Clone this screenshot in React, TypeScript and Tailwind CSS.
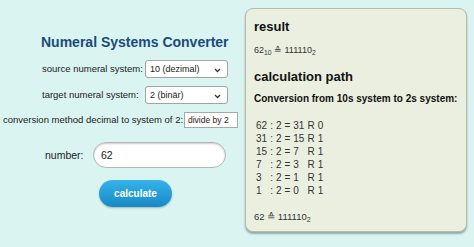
import { FC } from 'react';

const rows = [
  ['62', '2', '31', '0'],
  ['31', '2', '15', '1'],
  ['15', '2', '7', '1'],
  ['7', '2', '3', '1'],
  ['3', '2', '1', '1'],
  ['1', '2', '0', '1'],
];

const Chevron: FC = () => (
  <svg width="7" height="5" viewBox="0 0 7 5" className="absolute right-[6px] top-[7px]">
    <path d="M1 1l2.5 2.5L6 1" fill="none" stroke="#333" strokeWidth="1.3" />
  </svg>
);

const FakeSelect: FC<{ value: string }> = ({ value }) => (
  <div className="relative ml-[3px] h-[18px] w-[83px] shrink-0 rounded-[3px] border border-[#a3a3a3] bg-white pl-[4px] text-[9px] leading-[16px] text-[#222]">
    {value}
    <Chevron />
  </div>
);

const App: FC = () => {
  return (
    <div className="flex h-[247px] w-[474px] overflow-hidden bg-[#d9f4f1] font-['Liberation_Sans',Arial,sans-serif] text-[#222]">
      {/* left form */}
      <div className="flex w-[245px] shrink-0 flex-col pt-[34px]">
        <h1 className="pl-[41px] text-[14px] font-bold leading-[16px] text-[#1c4b7b]">
          Numeral Systems Converter
        </h1>

        <div className="mt-[10px] flex items-center pl-[42px]">
          <span className="w-[100px] shrink-0 whitespace-nowrap text-[9.5px] leading-[18px]">source numeral system:</span>
          <FakeSelect value="10 (dezimal)" />
        </div>

        <div className="mt-[8px] flex items-center pl-[42px]">
          <span className="w-[100px] shrink-0 whitespace-nowrap text-[9.5px] leading-[18px]">target numeral system:</span>
          <FakeSelect value="2 (binär)" />
        </div>

        <div className="mt-[8px] flex items-center pl-[3px]">
          <span className="w-[181px] shrink-0 whitespace-nowrap text-[9.5px] leading-[16px]">
            conversion method decimal to system of 2:
          </span>
          <div className="h-[16px] w-[54px] shrink-0 border border-[#a8a8a8] bg-white pl-[3px] text-[8.5px] leading-[14px]">
            divide by 2
          </div>
        </div>

        <div className="mt-[14px] flex items-center pl-[45px]">
          <span className="w-[48px] text-[10.5px] leading-[26px]">number:</span>
          <div className="h-[26px] w-[133px] rounded-[13px] border border-[#b5b5b5] bg-white pl-[7px] text-[10.5px] leading-[24px] shadow-[inset_0_1px_2px_rgba(0,0,0,0.2)]">
            62
          </div>
        </div>

        <div className="mt-[12px] pl-[99px]">
          <button className="h-[27px] w-[73px] rounded-full bg-gradient-to-b from-[#35b3ea] to-[#1789c6] text-[10px] font-bold text-white shadow-[0_1px_2px_rgba(0,0,0,0.25)]">
            calculate
          </button>
        </div>
      </div>

      {/* result panel */}
      <div className="relative z-10 mt-[8px] h-[224px] w-[222px] shrink-0 rounded-[8px] border border-[#b4bbad] bg-[#ebefe0] pl-[8px] pt-[10px] shadow-[0_2px_2px_rgba(0,0,0,0.3)]">
        <div className="text-[13px] font-bold leading-[15px] text-[#111]">result</div>
        <div className="mt-[11px] text-[9px] leading-[11px] text-[#333]">
          62<sub>10</sub> ≙ 111110<sub>2</sub>
        </div>
        <div className="mt-[13px] text-[13px] font-bold leading-[15px] text-[#111]">calculation path</div>
        <div className="mt-[9px] text-[10px] font-bold leading-[12px] text-[#111]">
          Conversion from 10s system to 2s system:
        </div>
        <table className="mt-[14px] ml-[2px] border-collapse text-[10px] leading-[13px] text-[#333]">
          <tbody>
            {rows.map(([n, d, q, r]) => (
              <tr key={n}>
                <td className="p-0 pr-[3px]">{n}</td>
                <td className="p-0 pr-[3px]">:</td>
                <td className="p-0 pr-[3px]">{d}</td>
                <td className="p-0 pr-[3px]">=</td>
                <td className="p-0 pr-[3px]">{q}</td>
                <td className="p-0 pr-[3px]">R</td>
                <td className="p-0">{r}</td>
              </tr>
            ))}
          </tbody>
        </table>
        <div className="mt-[14px] text-[9.5px] leading-[12px] text-[#333]">
          62 ≙ 111110<sub>2</sub>
        </div>
      </div>
    </div>
  );
};

export default App;
